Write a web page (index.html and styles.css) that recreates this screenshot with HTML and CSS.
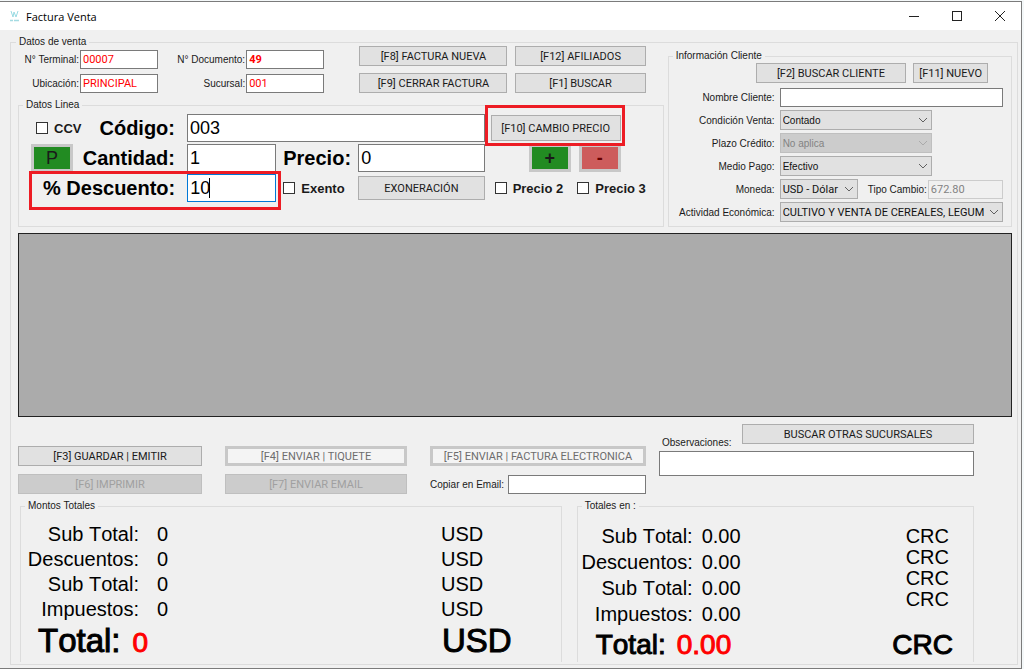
FILE: index.html
```
<!DOCTYPE html>
<html lang="es">
<head>
    <meta charset="UTF-8" />
    <meta name="viewport" content="width=device-width, initial-scale=1.0" />
    <title>Factura Venta</title>
    <link rel="stylesheet" href="styles.css">
</head>
<body>

<div class="window">

    <!-- Title bar -->
    <header class="titlebar">
        <svg class="app-icon" width="12" height="14" viewBox="0 0 12 14">
            <path d="M3 2l2 6 1-5 2 5 2-6" fill="none" stroke="#9adbe3" stroke-width="1" />
            <path d="M2 11.500h3M6 11.500h5" stroke="#a5dbe2" stroke-width="1.500" />
        </svg>
        <h1>Factura Venta</h1>
        <div class="window-buttons">
            <button type="button" aria-label="Minimizar">
                <svg width="12" height="12" viewBox="0 0 12 12"><path d="M1 6.5h10" /></svg>
            </button>
            <button type="button" aria-label="Maximizar">
                <svg width="12" height="12" viewBox="0 0 12 12"><rect x="1.5" y="1.5" width="9" height="9" /></svg>
            </button>
            <button type="button" aria-label="Cerrar">
                <svg width="12" height="12" viewBox="0 0 12 12"><path d="M1 1l10 10M11 1L1 11" /></svg>
            </button>
        </div>
    </header>

    <main>
        <fieldset class="sale">
            <legend>Datos de venta</legend>

            <div class="top">
                <div class="top-left">

                    <!-- Sale header -->
                    <div class="sale-head">
                        <div class="sale-fields">
                            <label for="terminal">N° Terminal:</label>
                            <input id="terminal" type="text" value="00007">
                            <label for="documento">N° Documento:</label>
                            <input id="documento" class="strong" type="text" value="49">
                            <label for="ubicacion">Ubicación:</label>
                            <input id="ubicacion" type="text" value="PRINCIPAL">
                            <label for="sucursal">Sucursal:</label>
                            <input id="sucursal" type="text" value="001">
                        </div>
                        <div class="sale-buttons">
                            <button type="button">[F8] FACTURA NUEVA</button>
                            <button type="button">[F12] AFILIADOS</button>
                            <button type="button">[F9] CERRAR FACTURA</button>
                            <button type="button">[F1] BUSCAR</button>
                        </div>
                    </div>

                    <!-- Line data -->
                    <fieldset class="line">
                        <legend>Datos Linea</legend>
                        <div class="line-grid">
                            <div class="line-label">
                                <label class="check ccv"><input type="checkbox"> CCV</label>
                                <label for="codigo">Código:</label>
                            </div>
                            <input id="codigo" class="wide" type="text" value="003">
                            <div class="line-extra">
                                <span class="marked"><button type="button" class="price-change">[F10] CAMBIO PRECIO</button></span>
                            </div>

                            <div class="line-label">
                                <button type="button" class="color-btn green">P</button>
                                <label for="cantidad">Cantidad:</label>
                            </div>
                            <input id="cantidad" type="text" value="1">
                            <label class="price-label" for="precio">Precio:</label>
                            <input id="precio" type="text" value="0">
                            <div class="line-extra plus-minus">
                                <button type="button" class="color-btn green">+</button>
                                <button type="button" class="color-btn red">-</button>
                            </div>

                            <div class="discount">
                                <label for="descuento">% Descuento:</label>
                                <div class="focused"><input id="descuento" type="text" value="10"><span class="caret"></span></div>
                            </div>
                            <label class="check exento"><input type="checkbox"> Exento</label>
                            <button type="button" class="exonerate">EXONERACIÓN</button>
                            <div class="line-extra price-checks">
                                <label class="check"><input type="checkbox"> Precio 2</label>
                                <label class="check"><input type="checkbox"> Precio 3</label>
                            </div>
                        </div>
                    </fieldset>
                </div>

                <!-- Customer -->
                <fieldset class="customer">
                    <legend>Información Cliente</legend>
                    <div class="customer-buttons">
                        <button type="button">[F2] BUSCAR CLIENTE</button>
                        <button type="button">[F11] NUEVO</button>
                    </div>
                    <div class="customer-grid">
                        <label for="nombre">Nombre Cliente:</label>
                        <input id="nombre" type="text">

                        <label for="condicion">Condición Venta:</label>
                        <select id="condicion" class="medium"><option>Contado</option></select>

                        <label for="plazo">Plazo Crédito:</label>
                        <select id="plazo" class="medium" disabled><option>No aplica</option></select>

                        <label for="medio">Medio Pago:</label>
                        <select id="medio" class="medium"><option>Efectivo</option></select>

                        <label for="moneda">Moneda:</label>
                        <div class="currency-row">
                            <select id="moneda"><option>USD - Dólar</option></select>
                            <label for="cambio">Tipo Cambio:</label>
                            <input id="cambio" type="text" value="672.80" disabled>
                        </div>

                        <label for="actividad">Actividad Económica:</label>
                        <select id="actividad"><option>CULTIVO Y VENTA DE CEREALES, LEGUMBRES</option></select>
                    </div>
                </fieldset>
            </div>

            <!-- Invoice lines -->
            <div class="lines-view"></div>

            <!-- Actions -->
            <div class="actions">
                <div class="action-buttons">
                    <button type="button">[F3] GUARDAR | EMITIR</button>
                    <button type="button" class="framed">[F4] ENVIAR | TIQUETE</button>
                    <button type="button" class="framed">[F5] ENVIAR | FACTURA ELECTRONICA</button>
                    <button type="button" disabled>[F6] IMPRIMIR</button>
                    <button type="button" disabled>[F7] ENVIAR EMAIL</button>
                    <div class="email">
                        <label for="email">Copiar en Email:</label>
                        <input id="email" type="text">
                    </div>
                </div>
                <div class="notes">
                    <div class="notes-head">
                        <label for="observaciones">Observaciones:</label>
                        <button type="button">BUSCAR OTRAS SUCURSALES</button>
                    </div>
                    <input id="observaciones" type="text">
                </div>
            </div>

            <!-- Totals -->
            <div class="totals">
                <fieldset class="totals-usd">
                    <legend>Montos Totales</legend>
                    <div class="amounts">
                        <span class="name">Sub Total:</span><span>0</span><span>USD</span>
                        <span class="name">Descuentos:</span><span>0</span><span>USD</span>
                        <span class="name">Sub Total:</span><span>0</span><span>USD</span>
                        <span class="name">Impuestos:</span><span>0</span><span>USD</span>
                    </div>
                    <div class="grand">
                        <span>Total:</span><span class="sum">0</span><span class="unit">USD</span>
                    </div>
                </fieldset>
                <fieldset class="totals-crc">
                    <legend>Totales en :</legend>
                    <div class="columns">
                        <div class="amounts">
                            <span class="name">Sub Total:</span><span>0.00</span>
                            <span class="name">Descuentos:</span><span>0.00</span>
                            <span class="name">Sub Total:</span><span>0.00</span>
                            <span class="name">Impuestos:</span><span>0.00</span>
                        </div>
                        <div class="units">
                            <span>CRC</span><span>CRC</span><span>CRC</span><span>CRC</span>
                        </div>
                    </div>
                    <div class="grand">
                        <span>Total:</span><span class="sum">0.00</span><span class="unit">CRC</span>
                    </div>
                </fieldset>
            </div>
        </fieldset>
    </main>
</div>

</body>
</html>
```
FILE: styles.css
```
* {
    margin: 0;
    padding: 0;
    box-sizing: border-box;
}

body {
    font-family: Roboto, "Liberation Sans", sans-serif;
    font-size: 11px;
    color: #1a1a1a;
    background: #f4f8f9;
    padding: 1px 2px 0 0;
}

.window {
    display: flex;
    flex-direction: column;
    min-height: calc(100vh - 1px);
    background: #f0f0f0;
    border: 1px solid #7b7b7b;
    border-left: none;
}

/* Title bar */
.titlebar {
    display: flex;
    align-items: center;
    gap: 6px;
    height: 28px;
    padding-left: 8px;
    background: #fff;
}

.titlebar h1 {
    flex: 1;
    font: 11px "Open Sans", sans-serif;
    color: #000;
}

.window-buttons {
    display: flex;
}

.window-buttons button {
    display: flex;
    align-items: center;
    justify-content: center;
    width: 43px;
    height: 28px;
    border: none;
    background: none;
}

.window-buttons svg {
    fill: none;
    stroke: #222;
    stroke-width: 1;
}

main {
    flex: 1;
    display: flex;
    padding: 8px 3px 3px 10px;
}

/* Group boxes */
fieldset {
    min-width: 0;
    border: 1px solid #dcdcdc;
}

legend,
label {
    font-family: "Liberation Sans", Arial, sans-serif;
    font-size: 10px;
}

legend {
    margin-left: 4px;
    padding: 0 3px;
    line-height: 8px;
}

.sale {
    flex: 1;
    padding: 0 5px 0 7px;
}

.sale > legend {
    margin-left: -2px;
}

/* Controls */
button {
    height: 20px;
    font: inherit;
    color: #1a1a1a;
    background: #e1e1e1;
    border: 1px solid #adadad;
    white-space: nowrap;
}

button:disabled {
    color: #a0a0a0;
    background: #ccc;
    border-color: #bfbfbf;
}

button.framed {
    color: #6d6d6d;
    background: #f4f4f4;
    border: 3px solid #c8c8c8;
}

input[type="text"] {
    width: 100%;
    min-width: 0;
    height: 19px;
    padding: 0 2px;
    font: inherit;
    color: #000;
    background: #fff;
    border: 1px solid #7a7a7a;
}

input[type="text"]:disabled {
    color: #838383;
    background: #f0f0f0;
    border-color: #ccc;
}

select {
    width: 100%;
    min-width: 0;
    height: 20px;
    padding: 0 18px 0 2px;
    font: inherit;
    color: #111;
    background: #e1e1e1 url("data:image/svg+xml,%3Csvg xmlns='http://www.w3.org/2000/svg' width='10' height='6'%3E%3Cpath d='M1 1l4 4 4-4' fill='none' stroke='%23606060'/%3E%3C/svg%3E") no-repeat right 3px center;
    border: 1px solid #adadad;
    border-radius: 0;
    appearance: none;
}

select:disabled {
    color: #838383;
    background-color: #ccc;
    background-image: url("data:image/svg+xml,%3Csvg xmlns='http://www.w3.org/2000/svg' width='10' height='6'%3E%3Cpath d='M1 1l4 4 4-4' fill='none' stroke='%23aaaaaa'/%3E%3C/svg%3E");
    border-color: #bfbfbf;
    opacity: 1;
}

label {
    white-space: nowrap;
}

.check {
    display: flex;
    align-items: center;
    gap: 6px;
    font-size: 13px;
    font-weight: bold;
}

.check input {
    width: 12px;
    height: 12px;
    background: #fff;
    border: 1px solid #333;
    appearance: none;
}

/* Top area */
.top {
    display: grid;
    grid-template-columns: 645fr 344fr;
    column-gap: 4px;
}

.top-left {
    display: flex;
    flex-direction: column;
    gap: 8px;
    min-width: 0;
}

.sale-head {
    display: flex;
    gap: 35px;
    padding-right: 18px;
}

.sale-fields {
    flex: 306;
    display: grid;
    grid-template-columns: 62px 1fr 88px 1fr;
    gap: 4px 0;
    align-items: center;
    padding-top: 4px;
}

.sale-fields label {
    padding-right: 1px;
    text-align: right;
}

.sale-fields input[type="text"] {
    color: #f00;
}

.sale-fields .strong {
    font-weight: bold;
}

.sale-buttons {
    flex: 286;
    display: grid;
    grid-template-columns: 148fr 130fr;
    gap: 7px 8px;
}

/* Line data */
.line {
    flex: 1;
}

.line-grid {
    display: grid;
    grid-template-columns: 156px 89fr 82px 126fr 178px;
    grid-auto-rows: 28px;
    row-gap: 2px;
    align-items: center;
    padding: 5px 0 24px 12px;
}

.line-grid input[type="text"] {
    height: 28px;
    font: 18px "Liberation Sans", Arial, sans-serif;
}

.line-grid .wide {
    grid-column: span 3;
}

.line-label {
    display: flex;
    align-items: center;
    justify-content: space-between;
    padding-right: 12px;
}

.line-label > label:last-child,
.price-label,
.discount > label {
    font-size: 20px;
    font-weight: bold;
    color: #000;
}

.line-label .ccv {
    padding-left: 5px;
}

.price-label {
    padding-left: 7px;
}

.line-extra {
    display: flex;
    align-items: center;
    padding-left: 6px;
}

.price-change {
    width: 130px;
    height: 26px;
}

.color-btn {
    width: 42px;
    height: 28px;
    font: 18px "Liberation Sans", Arial, sans-serif;
    border: 3px solid #c8c8c8;
}

.green {
    background: #228b22;
}

.red {
    color: #600;
    background: #cd5c5c;
}

.plus-minus {
    gap: 8px;
    padding-left: 44px;
}

.plus-minus .color-btn {
    font-weight: bold;
}

.discount {
    grid-column: span 2;
    display: flex;
    align-items: center;
    justify-content: flex-end;
    gap: 12px;
    position: relative;
}

.focused {
    position: relative;
    width: 89px;
}

.focused input[type="text"] {
    border-color: #0078d7;
}

.caret {
    position: absolute;
    top: 4px;
    left: 22px;
    width: 1px;
    height: 20px;
    background: #000;
}

.exento {
    padding-left: 7px;
}

.exonerate {
    height: 24px;
}

.price-checks {
    gap: 14px;
    padding-left: 10px;
}

/* Red frames over the controls of interest */
.marked {
    position: relative;
}

.marked::after,
.discount::after {
    content: "";
    position: absolute;
    border: 3px solid #ed1c24;
    pointer-events: none;
}

.marked::after {
    inset: -10px -4px -5px -6px;
}

.discount::after {
    inset: -3px -5px -8px -2px;
}

/* Customer */
.customer {
    margin-top: 6px;
    padding: 3px 8px 4px 0;
}

.customer-buttons {
    display: grid;
    grid-template-columns: 151fr 75fr;
    gap: 7px;
    padding: 0 15px 4px 87px;
}

.customer-grid {
    display: grid;
    grid-template-columns: 111px minmax(0, 1fr);
    grid-auto-rows: 20px;
    row-gap: 3px;
    align-items: center;
}

.customer-grid > label {
    padding-right: 5px;
    text-align: right;
}

.customer-grid .medium {
    width: 68%;
    font: 10px "Liberation Sans", Arial, sans-serif;
}

.currency-row {
    display: grid;
    grid-template-columns: 78fr 70px 75fr;
    align-items: center;
}

.currency-row label {
    padding-right: 1px;
    text-align: right;
}

/* Invoice lines */
.lines-view {
    height: 184px;
    margin-top: 6px;
    background: #ababab;
    border: 1px solid #222;
}

/* Actions */
.actions {
    display: flex;
    gap: 13px;
    padding: 7px 38px 8px 0;
}

.action-buttons {
    flex: 628;
    display: grid;
    grid-template-columns: 184fr 182fr 216fr;
    gap: 8px 23px;
    padding-top: 22px;
}

.email {
    display: flex;
    align-items: center;
    gap: 4px;
    min-width: 0;
}

.notes {
    flex: 315;
}

.notes-head {
    display: flex;
    justify-content: space-between;
    margin-bottom: 2px;
    padding-left: 3px;
}

.notes-head label {
    padding-top: 13px;
    line-height: 12px;
}

.notes-head button {
    width: 232px;
}

.notes input[type="text"] {
    height: 25px;
}

/* Totals */
.totals {
    display: flex;
    gap: 15px;
    padding: 0 38px 0 2px;
}

.totals fieldset {
    border-bottom: none;
}

.totals-usd {
    flex: 542;
    padding-top: 12px;
}

.totals-crc {
    flex: 397;
    padding-top: 13px;
}

.amounts,
.units,
.grand {
    font-family: "Liberation Sans", Arial, sans-serif;
    font-size: 20px;
    font-kerning: none;
    color: #000;
}

.amounts {
    display: grid;
    grid-template-columns: 118px 266px 1fr;
    column-gap: 18px;
    line-height: 25px;
}

.amounts .name {
    text-align: right;
}

.totals-crc .columns {
    display: flex;
    justify-content: space-between;
}

.totals-crc .amounts {
    grid-template-columns: 115px auto;
    column-gap: 9px;
    line-height: 26px;
}

.units {
    display: flex;
    flex-direction: column;
    padding: 3px 24px 0 0;
    line-height: 21px;
}

.grand {
    display: flex;
    align-items: baseline;
    -webkit-text-stroke: 1px currentColor;
}

.grand .sum {
    color: #f00;
}

.totals-usd .grand {
    padding: 0 49px 0 17px;
    font-size: 33px;
    line-height: 37px;
}

.totals-usd .sum {
    padding-left: 12px;
    font-size: 28px;
}

.totals-crc .grand {
    padding: 0 20px 0 18px;
    font-size: 28px;
    line-height: 35px;
}

.totals-crc .sum {
    padding-left: 11px;
}

.grand .unit {
    margin-left: auto;
}
```
